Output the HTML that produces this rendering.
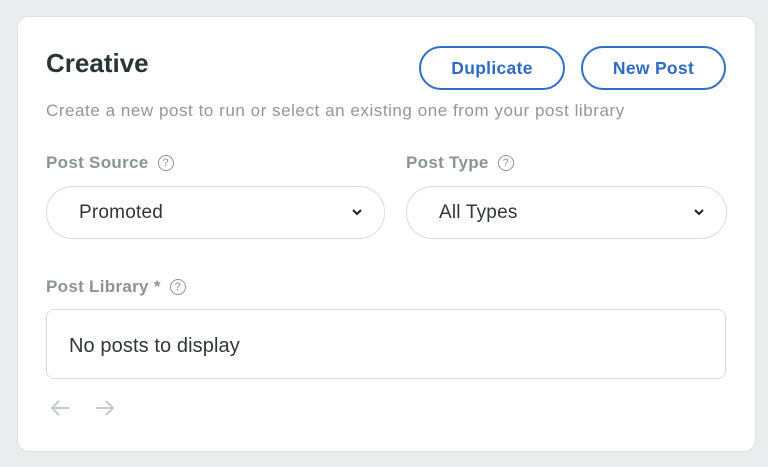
<!DOCTYPE html>
<html><head><style>
body{margin:0;width:768px;height:467px;background:#ebecee;font-family:"Liberation Sans",sans-serif;position:relative;overflow:hidden}
.card{position:absolute;left:17px;top:16px;width:737px;height:434px;background:#fff;border:1px solid #dde0e3;border-radius:12px}
.a{position:absolute}
h1{position:absolute;left:46px;top:48px;margin:0;font-size:26px;font-weight:bold;color:#2a3336}
.btn{position:absolute;top:46px;height:40px;border:2.5px solid #2f6fc9;border-radius:23px;color:#2d6cc4;font-weight:bold;font-size:17.5px;letter-spacing:0.3px;display:flex;align-items:center;justify-content:center}
.sub{left:46px;top:101px;font-size:17px;color:#8e989b;letter-spacing:0.55px}
.lab{font-size:17px;font-weight:bold;color:#8a9497;display:flex;align-items:center;letter-spacing:0.3px}
.q{display:inline-block;width:14px;height:14px;border:1.3px solid #8a9497;border-radius:50%;font-size:11px;font-weight:normal;text-align:center;line-height:14px;margin-left:9px;letter-spacing:0}
.sel{position:absolute;top:186px;height:51px;border:1px solid #d8dcdf;border-radius:26px;font-size:19px;color:#2f3638;display:flex;align-items:center;letter-spacing:0.2px}
.sel svg{position:absolute;right:22px;top:22px}
.box{left:46px;top:309px;width:680px;height:70px;border:1px solid #d8dcdf;border-radius:8px;font-size:20px;color:#2f3638;display:flex;align-items:center;box-sizing:border-box;padding-left:22px;padding-top:4px;letter-spacing:0.1px}
</style></head><body>
<div class="card"></div>
<h1>Creative</h1>
<div class="btn" style="left:419px;width:142px">Duplicate</div>
<div class="btn" style="left:581px;width:141px">New Post</div>
<div class="a sub">Create a new post to run or select an existing one from your post library</div>
<div class="a lab" style="left:46px;top:153px">Post Source<span class="q">?</span></div>
<div class="a lab" style="left:406px;top:153px">Post Type<span class="q">?</span></div>
<div class="sel" style="left:46px;width:337px"><span style="margin-left:32px">Promoted</span><svg width="10" height="7" viewBox="0 0 10 7"><path d="M1 1l4 4 4-4" fill="none" stroke="#222" stroke-width="2"/></svg></div>
<div class="sel" style="left:406px;width:319px"><span style="margin-left:32px">All Types</span><svg width="10" height="7" viewBox="0 0 10 7"><path d="M1 1l4 4 4-4" fill="none" stroke="#222" stroke-width="2"/></svg></div>
<div class="a lab" style="left:46px;top:277px">Post Library *<span class="q">?</span></div>
<div class="a box">No posts to display</div>
<svg class="a" style="left:50px;top:399px" width="20" height="18" viewBox="0 0 20 18"><path d="M19 9H2M9 2L2 9l7 7" fill="none" stroke="#c5cacc" stroke-width="2"/></svg>
<svg class="a" style="left:95px;top:399px" width="20" height="18" viewBox="0 0 20 18"><path d="M1 9h17M11 2l7 7-7 7" fill="none" stroke="#c5cacc" stroke-width="2"/></svg>
</body></html>
